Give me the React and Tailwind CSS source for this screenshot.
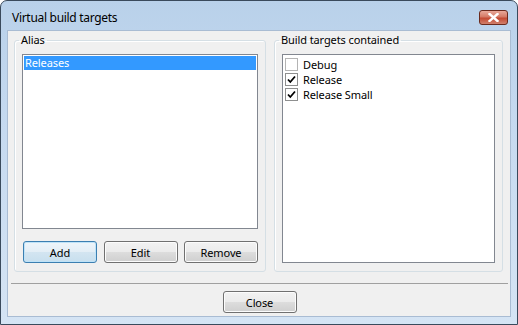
import React from "react";

const font = { fontFamily: '"Noto Sans", "Open Sans", sans-serif' };

const Button = ({ children, isDefault }) => (
  <button
    className={`w-[74px] h-[22px] rounded-[3px] border text-[11px] tracking-[-0.1px] leading-none text-black ${
      isDefault
        ? "border-[#3c7fb1] bg-[linear-gradient(to_bottom,#eef5fa_0%,#e3eef6_50%,#d3e5f1_51%,#c8dfee_100%)] shadow-[inset_0_0_0_1px_#bfe3f8]"
        : "border-[#707070] bg-[linear-gradient(to_bottom,#f2f2f2_0%,#ebebeb_50%,#dddddd_51%,#cfcfcf_100%)] shadow-[inset_0_0_0_1px_#fcfcfc]"
    }`}
  >
    {children}
  </button>
);

const CheckBox = ({ checked }) => (
  <span
    className={`w-[13px] h-[13px] border bg-[linear-gradient(135deg,#dcdcdc,#ffffff)] flex items-center justify-center shrink-0 ${
      checked ? "border-[#8e8f8f]" : "border-[#b4b4b4]"
    }`}
  >
    <span className="w-[11px] h-[11px] bg-white flex items-center justify-center">
      {checked && (
        <svg width="9" height="9" viewBox="0 0 9 9">
          <path d="M1 4.5 L3.3 7 L8 1.5" fill="none" stroke="#000" strokeWidth="1.8" />
        </svg>
      )}
    </span>
  </span>
);

const targets = [
  { name: "Debug", checked: false },
  { name: "Release", checked: true },
  { name: "Release Small", checked: true },
];

export default function App() {
  return (
    <div className="w-[518px] h-[325px] bg-white" style={font}>
      <div className="w-full h-full rounded-t-[7px] border border-[#3a4a5c] bg-[linear-gradient(to_bottom,#b9d1ea_0%,#c6daf0_40%,#d5e4f4_100%)] flex flex-col">
        <div className="h-[29px] flex items-center justify-between pl-[11px] pr-[9px] shrink-0">
          <span className="text-[12px] tracking-[-0.3px] text-black pt-[5px]">Virtual build targets</span>
          <div className="w-[29px] h-[15px] mt-[3px] rounded-[3px] border border-[#6b2a1d] bg-[linear-gradient(to_bottom,#e9a99a_0%,#d47a66_45%,#c44a33_55%,#d0806c_100%)] flex items-center justify-center">
            <svg width="11" height="9" viewBox="0 0 11 9">
              <path d="M1.5 1 L9.5 8 M9.5 1 L1.5 8" stroke="#fff" strokeWidth="2.4" strokeLinecap="square" />
            </svg>
          </div>
        </div>
        <div className="mx-[6px] mb-[7px] flex-1 bg-[#f0f0f0] border border-[#a9bcd3] flex flex-col text-[11px] tracking-[-0.1px]">
          <div className="flex gap-[8px] pl-[6px] pr-[4px] mt-[2px]">
            <fieldset className="w-[252px] border border-[#d5dfe5] rounded-[3px] px-[7px] pb-[8px] shadow-[inset_1px_1px_0_#fff]">
              <legend className="ml-[-3px] px-[2px] leading-[14px] text-black">Alias</legend>
              <div className="mt-[7px] h-[175px] border border-[#828790] bg-white p-[1px]">
                <div className="h-[14px] bg-[#3399ff] text-white leading-[14px] pl-[1px]">Releases</div>
              </div>
              <div className="mt-[12px] flex justify-between pl-[1px]">
                <Button isDefault>Add</Button>
                <Button>Edit</Button>
                <Button>Remove</Button>
              </div>
            </fieldset>
            <fieldset className="w-[229px] border border-[#d5dfe5] rounded-[3px] px-[7px] pb-[6px] shadow-[inset_1px_1px_0_#fff]">
              <legend className="ml-[-3px] px-[2px] leading-[14px] text-black">Build targets contained</legend>
              <div className="mt-[7px] h-[209px] border border-[#828790] bg-white pt-[2px] pl-[2px]">
                {targets.map((t) => (
                  <div key={t.name} className="h-[15px] flex items-center gap-[5px]">
                    <CheckBox checked={t.checked} />
                    <span className="leading-[15px] text-black">{t.name}</span>
                  </div>
                ))}
              </div>
            </fieldset>
          </div>
          <div className="mt-[11px] mx-[3px] mr-[2px] h-[2px] border-t border-[#a0a0a0] border-b-white" />
          <div className="mt-[6px] flex justify-center pl-[1px]">
            <Button>Close</Button>
          </div>
        </div>
      </div>
    </div>
  );
}
